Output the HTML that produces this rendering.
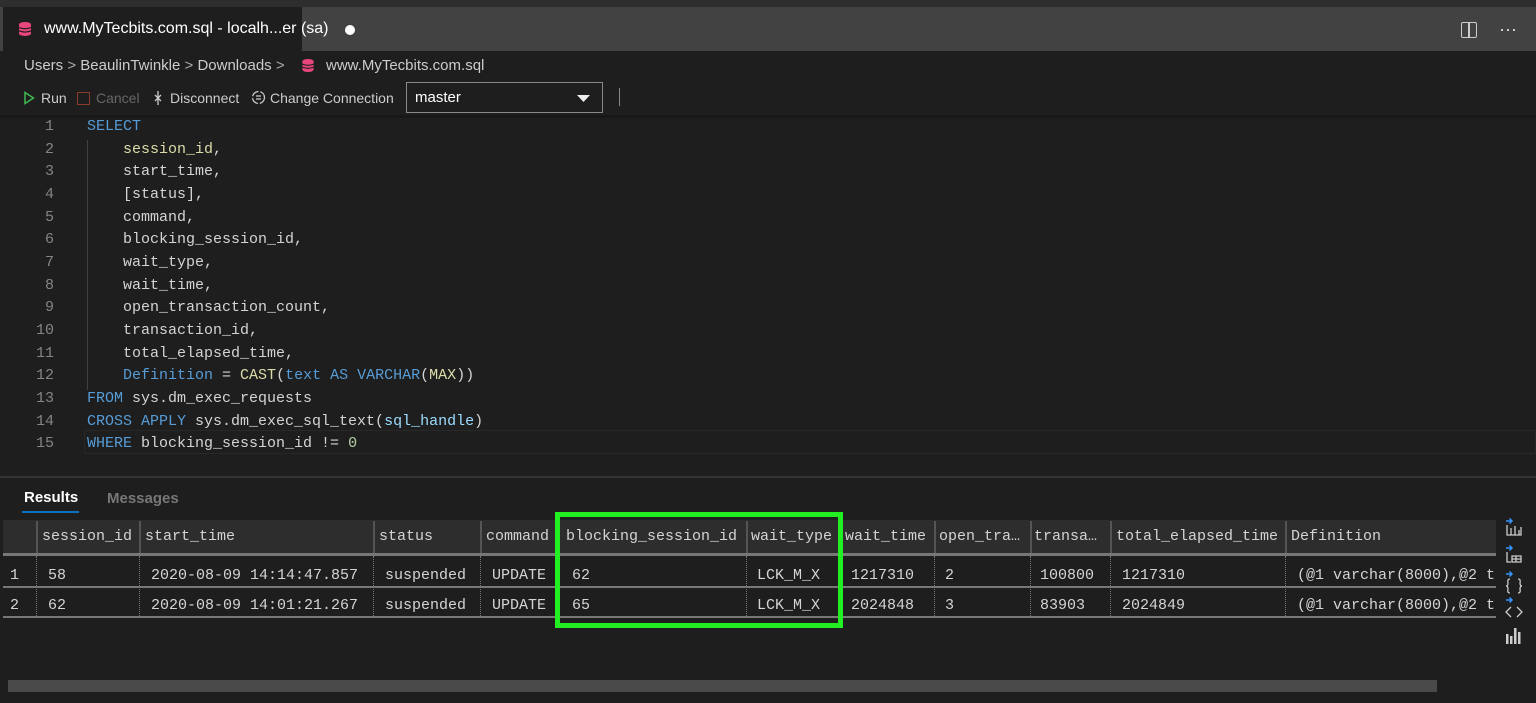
<!DOCTYPE html>
<html><head><meta charset="utf-8"><style>
*{margin:0;padding:0;box-sizing:border-box}
body{width:1536px;height:703px;background:#1e1e1e;position:relative;overflow:hidden;font-family:"Liberation Sans",sans-serif;color:#ccc}
.a{position:absolute;white-space:pre}
.m{font-family:"Liberation Mono",monospace;font-size:15px}
.ln{color:#858585;text-align:right;width:24px;left:30px}
.code{left:87px;color:#d4d4d4}
.k{color:#569cd6}.y{color:#dcdcaa}.v{color:#9cdcfe}
.cell{position:absolute;color:#d4d4d4;font-family:"Liberation Mono",monospace;font-size:15px;white-space:pre}
</style></head><body>
<div class="a" style="left:0;top:0;width:1536px;height:7px;background:#2e2e2e"></div>
<div class="a" style="left:0;top:7px;width:1536px;height:44px;background:#424242"></div>
<div class="a" style="left:3px;top:7px;width:299px;height:44px;background:#1e1e1e"></div>
<svg class="a" style="left:19px;top:22px" width="12" height="14" viewBox="0 0 12 14"><ellipse cx="6" cy="2.5" rx="6" ry="2.5" fill="#e8467c"/><rect x="0" y="2.5" width="12" height="9" fill="#e8467c"/><ellipse cx="6" cy="11.5" rx="6" ry="2.5" fill="#e8467c"/><path d="M0 5.5Q6 8 12 5.5M0 8.8Q6 11.3 12 8.8" stroke="#1e1e1e" stroke-width="1.2" fill="none"/></svg>
<div class="a" style="left:44px;top:20px;font-size:16px;color:#fff">www.MyTecbits.com.sql - localh...er (sa)</div>
<div class="a" style="left:345px;top:25px;width:10px;height:10px;border-radius:50%;background:#fff"></div>
<div class="a" style="left:1461px;top:22px;width:16px;height:16px;border:1.5px solid #ccc;border-radius:2px"></div>
<div class="a" style="left:1468px;top:22px;width:1.5px;height:16px;background:#ccc"></div>
<div class="a" style="left:1501px;top:29px;width:2px;height:2px;background:#ccc"></div>
<div class="a" style="left:1507px;top:29px;width:2px;height:2px;background:#ccc"></div>
<div class="a" style="left:1513px;top:29px;width:2px;height:2px;background:#ccc"></div>
<div class="a" style="left:24px;top:57px;font-size:15px;color:#ccc">Users <span style="color:#aaa">&gt;</span> BeaulinTwinkle <span style="color:#aaa">&gt;</span> Downloads <span style="color:#aaa">&gt;</span></div>
<svg class="a" style="left:302px;top:59px" width="12" height="13" viewBox="0 0 12 14"><ellipse cx="6" cy="2.5" rx="6" ry="2.5" fill="#e8467c"/><rect x="0" y="2.5" width="12" height="9" fill="#e8467c"/><ellipse cx="6" cy="11.5" rx="6" ry="2.5" fill="#e8467c"/><path d="M0 5.5Q6 8 12 5.5M0 8.8Q6 11.3 12 8.8" stroke="#1e1e1e" stroke-width="1.2" fill="none"/></svg>
<div class="a" style="left:326px;top:57px;font-size:15px;color:#ccc">www.MyTecbits.com.sql</div>
<svg class="a" style="left:23px;top:91px" width="12" height="14"><path d="M2 1.5L10.5 7L2 12.5Z" stroke="#3fba50" stroke-width="1.5" fill="none"/></svg>
<div class="a" style="left:41px;top:90px;font-size:14px;color:#ccc">Run</div>
<div class="a" style="left:77px;top:92px;width:13px;height:13px;border:1.5px solid #8b3a2b"></div>
<div class="a" style="left:96px;top:90px;font-size:14px;color:#666">Cancel</div>
<svg class="a" style="left:153px;top:90px" width="10" height="16"><path d="M5 1V15M2 5L5 8L8 5M2 11L5 8L8 11" stroke="#ccc" stroke-width="1.3" fill="none"/></svg>
<div class="a" style="left:170px;top:90px;font-size:14px;color:#ccc">Disconnect</div>
<svg class="a" style="left:251px;top:90px" width="15" height="15"><circle cx="7.5" cy="7.5" r="6" stroke="#ccc" stroke-width="1.3" fill="none" stroke-dasharray="8 2"/><path d="M5 6H10M5 9H10" stroke="#ccc" stroke-width="1.2"/></svg>
<div class="a" style="left:270px;top:90px;font-size:14px;color:#ccc">Change Connection</div>
<div class="a" style="left:406px;top:82px;width:197px;height:31px;border:1px solid #888;background:#1e1e1e"></div>
<div class="a" style="left:415px;top:89px;font-size:15px;color:#fff">master</div>
<svg class="a" style="left:577px;top:95px" width="14" height="8"><path d="M0 0H13L6.5 7Z" fill="#eee"/></svg>
<div class="a" style="left:619px;top:88px;width:1px;height:18px;background:#888"></div>
<div class="a" style="left:0;top:115px;width:1536px;height:3px;background:#181818"></div>
<div class="a" style="left:87px;top:140px;width:1px;height:250px;background:#404040"></div>
<div class="a" style="left:84px;top:430px;width:1452px;height:24px;border:1px solid #282828"></div>
<div class="a m ln" style="top:116px;line-height:22.65px">1
2
3
4
5
6
7
8
9
10
11
12
13
14
15</div>
<div class="a m code" style="top:116px;line-height:22.65px"><span class="k">SELECT</span>
    <span class="y">session_id</span>,
    start_time,
    [status],
    command,
    blocking_session_id,
    wait_type,
    wait_time,
    open_transaction_count,
    transaction_id,
    total_elapsed_time,
    <span class="k">Definition</span> = <span class="y">CAST</span>(<span class="k">text</span> <span class="k">AS</span> <span class="k">VARCHAR</span>(<span class="y">MAX</span>))
<span class="k">FROM</span> sys.dm_exec_requests
<span class="k">CROSS APPLY</span> sys.dm_exec_sql_text(<span class="v">sql_handle</span>)
<span class="k">WHERE</span> blocking_session_id != <span style="color:#b5cea8">0</span></div>
<div class="a" style="left:0;top:476px;width:1536px;height:2px;background:#333"></div>
<div class="a" style="left:24px;top:489px;font-size:15px;font-weight:bold;color:#fff">Results</div>
<div class="a" style="left:22px;top:511px;width:57px;height:2px;background:#0e70c0"></div>
<div class="a" style="left:107px;top:490px;font-size:15px;font-weight:bold;color:#777">Messages</div>
<div class="a" style="left:3px;top:520px;width:1493px;height:33px;background:#2d2d2d"></div>
<div class="a" style="left:3px;top:553px;width:1493px;height:3px;background:#777"></div>
<div class="a" style="left:3px;top:586px;width:1493px;height:2px;background:#777"></div>
<div class="a" style="left:3px;top:616px;width:1493px;height:2px;background:#777"></div>
<div id="cols"></div>
<div class="cell" style="left:42px;top:528px">session_id</div>
<div class="cell" style="left:145px;top:528px">start_time</div>
<div class="cell" style="left:379px;top:528px">status</div>
<div class="cell" style="left:486px;top:528px">command</div>
<div class="cell" style="left:566px;top:528px">blocking_session_id</div>
<div class="cell" style="left:751px;top:528px">wait_type</div>
<div class="cell" style="left:845px;top:528px">wait_time</div>
<div class="cell" style="left:939px;top:528px">open_tra…</div>
<div class="cell" style="left:1034px;top:528px">transa…</div>
<div class="cell" style="left:1116px;top:528px">total_elapsed_time</div>
<div class="cell" style="left:1291px;top:528px">Definition</div>
<div class="cell" style="left:10px;top:567px">1</div>
<div class="cell" style="left:48px;top:567px">58</div>
<div class="cell" style="left:151px;top:567px">2020-08-09 14:14:47.857</div>
<div class="cell" style="left:385px;top:567px">suspended</div>
<div class="cell" style="left:492px;top:567px">UPDATE</div>
<div class="cell" style="left:572px;top:567px">62</div>
<div class="cell" style="left:757px;top:567px">LCK_M_X</div>
<div class="cell" style="left:851px;top:567px">1217310</div>
<div class="cell" style="left:945px;top:567px">2</div>
<div class="cell" style="left:1040px;top:567px">100800</div>
<div class="cell" style="left:1122px;top:567px">1217310</div>
<div class="cell" style="left:1297px;top:567px">(@1 varchar(8000),@2 t</div>
<div class="cell" style="left:10px;top:597px">2</div>
<div class="cell" style="left:48px;top:597px">62</div>
<div class="cell" style="left:151px;top:597px">2020-08-09 14:01:21.267</div>
<div class="cell" style="left:385px;top:597px">suspended</div>
<div class="cell" style="left:492px;top:597px">UPDATE</div>
<div class="cell" style="left:572px;top:597px">65</div>
<div class="cell" style="left:757px;top:597px">LCK_M_X</div>
<div class="cell" style="left:851px;top:597px">2024848</div>
<div class="cell" style="left:945px;top:597px">3</div>
<div class="cell" style="left:1040px;top:597px">83903</div>
<div class="cell" style="left:1122px;top:597px">2024849</div>
<div class="cell" style="left:1297px;top:597px">(@1 varchar(8000),@2 t</div>
<script>
var xs=[36,139,373,480,555,746,840,934,1030,1110,1285],h='';
xs.forEach(function(x){h+='<div class="a" style="left:'+x+'px;top:521px;width:2px;height:32px;background:#555"></div><div class="a" style="left:'+x+'px;top:556px;width:0;height:60px;border-left:1px dotted #777"></div>';});
document.getElementById('cols').outerHTML=h;
</script>
<div class="a" style="left:555px;top:512px;width:288px;height:116px;border:5px solid #22ee22"></div>
<svg class="a" style="left:1503px;top:518px" width="22" height="130">
<g stroke="#3794ff" stroke-width="1.5" fill="none"><path d="M3 3H9M6.5 0.5L9 3L6.5 5.5"/><path d="M3 30H9M6.5 27.5L9 30L6.5 32.5"/><path d="M3 56H9M6.5 53.5L9 56L6.5 58.5"/><path d="M3 82H9M6.5 79.5L9 82L6.5 84.5"/></g>
<g stroke="#ccc" stroke-width="1.3" fill="none"><path d="M4 7V17H18V9M8 17V10M12 17V8M16 17V12"/><path d="M4 34V44H8M9 38H18V44H9ZM9 41H18M13 38V44"/><path d="M7 61Q4 61 5 65Q5 68 3 68Q5 68 5 71Q4 75 7 75M15 61Q18 61 17 65Q17 68 19 68Q17 68 17 71Q18 75 15 75"/><path d="M8 89L3 94L8 99M14 89L19 94L14 99"/></g>
<g fill="#ccc"><rect x="3" y="116" width="2.5" height="10"/><rect x="7" y="118" width="2.5" height="8"/><rect x="11" y="110" width="2.5" height="16"/><rect x="15" y="114" width="2.5" height="12"/></g>
</svg>
<div class="a" style="left:8px;top:680px;width:1429px;height:12px;background:#4a4a4a"></div>
</body></html>
